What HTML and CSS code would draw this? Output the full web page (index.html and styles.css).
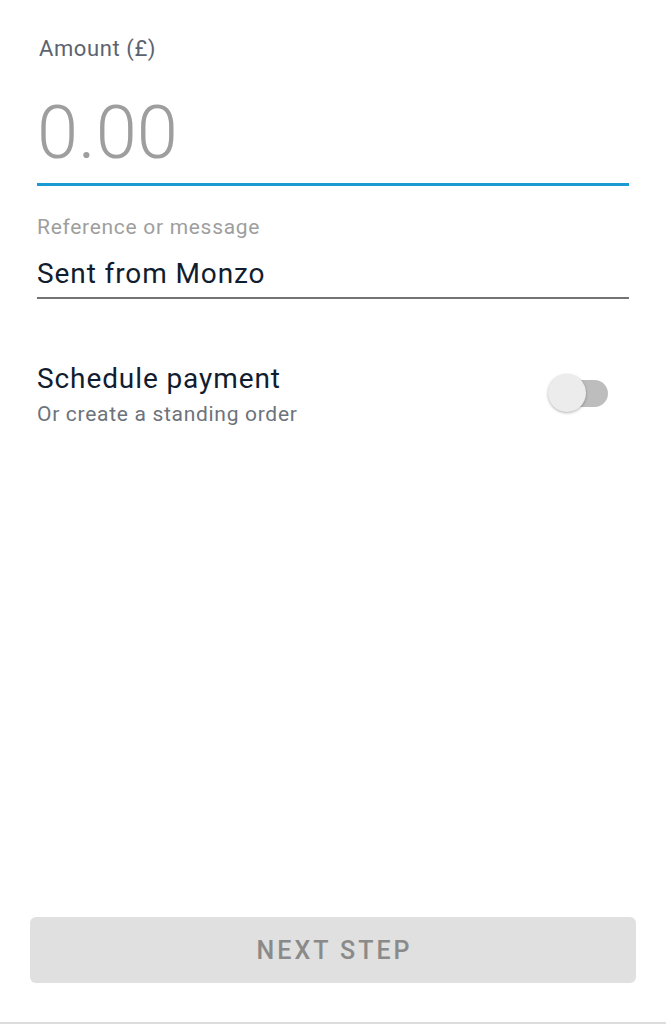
FILE: index.html
```html
<!DOCTYPE html>
<html lang="en">
<head>
<meta charset="utf-8">
<title>Payment</title>
<link rel="stylesheet" href="styles.css">
</head>
<body>
<div class="page">
  <div class="form">
    <div class="field amount-field">
      <div class="amount-label">Amount (£)</div>
      <div class="amount-value">0.00</div>
    </div>
    <div class="field ref-field">
      <div class="ref-label">Reference or message</div>
      <div class="ref-value">Sent from Monzo</div>
    </div>
    <div class="schedule-row">
      <div class="schedule-text">
        <div class="schedule-title">Schedule payment</div>
        <div class="schedule-sub">Or create a standing order</div>
      </div>
      <div class="switch">
        <div class="switch-track"></div>
        <div class="switch-thumb"></div>
      </div>
    </div>
  </div>
  <div class="footer">
    <div class="next-btn">NEXT STEP</div>
  </div>
</div>
</body>
</html>
```
FILE: styles.css
```css
html, body {
  margin: 0;
  padding: 0;
  background: #ffffff;
}

.page {
  height: 1024px;
  box-sizing: border-box;
  display: flex;
  flex-direction: column;
  border-bottom: 2px solid #dcdcdc;
  font-family: Roboto, "Liberation Sans", sans-serif;
}

.form {
  padding: 36px 37px 0 37px;
}

.amount-field {
  border-bottom: 3px solid #1b9bd1;
  padding-bottom: 10px;
}

.amount-label {
  font-size: 22px;
  line-height: 26px;
  color: #5c6370;
  letter-spacing: 0.6px;
  padding-left: 2px;
}

.amount-value {
  margin-top: 31px;
  font-size: 74px;
  line-height: 80px;
  font-weight: 300;
  color: #9e9e9e;
}

.ref-field {
  margin-top: 29px;
  border-bottom: 2px solid #747474;
  padding-bottom: 7px;
}

.ref-label {
  font-size: 21px;
  line-height: 24px;
  color: #9e9e9e;
  letter-spacing: 0.7px;
}

.ref-value {
  margin-top: 19px;
  font-size: 28px;
  line-height: 32px;
  color: #111d2f;
  letter-spacing: 0.9px;
}

.schedule-row {
  margin-top: 64px;
  display: flex;
  align-items: center;
  justify-content: space-between;
}

.schedule-title {
  font-size: 28px;
  line-height: 32px;
  color: #111d2f;
  letter-spacing: 0.9px;
}

.schedule-sub {
  margin-top: 7px;
  font-size: 21px;
  line-height: 24px;
  color: #6c737c;
  letter-spacing: 0.7px;
}

.switch {
  position: relative;
  width: 60px;
  height: 40px;
  margin-right: 21px;
  margin-top: -2px;
}

.switch-track {
  position: absolute;
  right: 0;
  top: 6px;
  width: 56px;
  height: 27px;
  border-radius: 14px;
  background: #bdbdbd;
}

.switch-thumb {
  position: absolute;
  left: 0;
  top: 0;
  width: 38px;
  height: 38px;
  border-radius: 50%;
  background: #ececec;
  box-shadow: 0 1px 3px rgba(0, 0, 0, 0.3);
}

.footer {
  margin-top: auto;
  padding: 0 30px 39px 30px;
}

.next-btn {
  height: 66px;
  border-radius: 6px;
  background: #e0e0e0;
  color: #8a8a8a;
  display: flex;
  align-items: center;
  justify-content: center;
  font-size: 25px;
  font-weight: 500;
  letter-spacing: 3px;
  padding-left: 3px;
}
```
